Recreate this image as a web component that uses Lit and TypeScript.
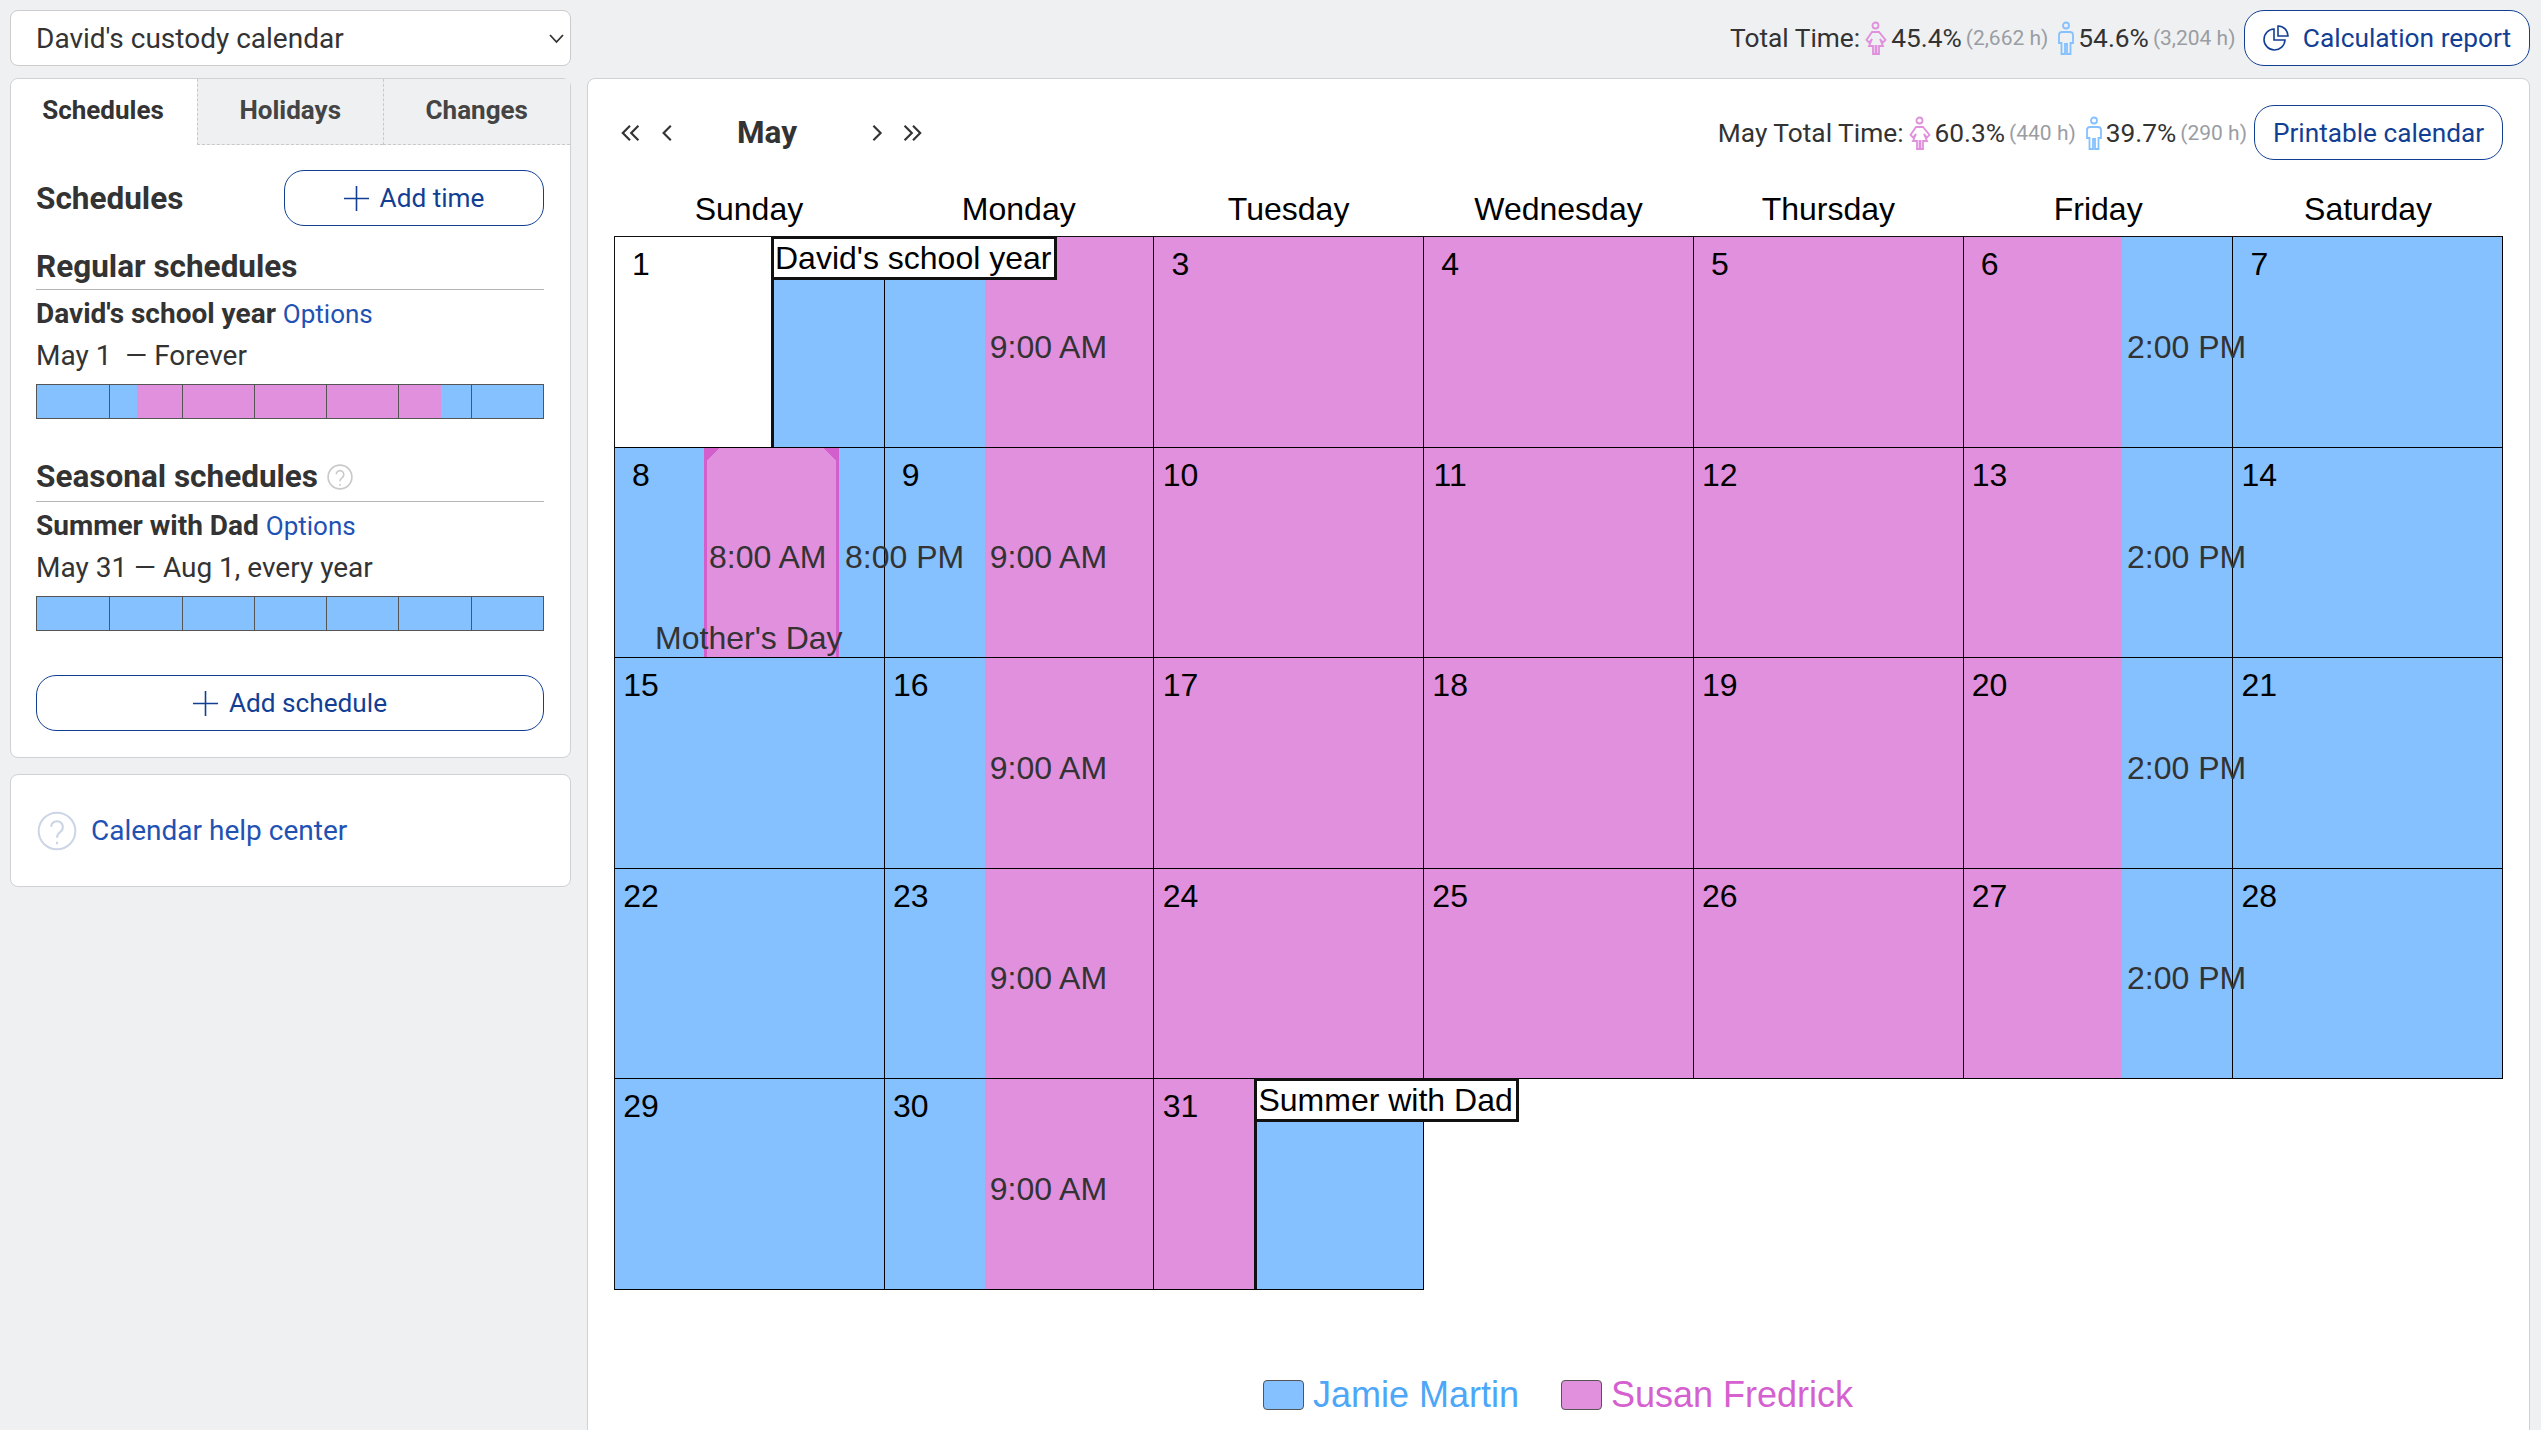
import { LitElement, html, css, svg } from "lit";
import { customElement } from "lit/decorators.js";

const BLUE = "#85c1ff";
const PINK = "#e090dc";

type Note = { text: string; left: number };
type Day = {
  n: number;
  split?: number; // pink/blue change in percent of the cell
  first?: string;
  second?: string;
  notes?: Note[];
  mother?: boolean;
  label?: string;
  labelLeft?: number;
  hideNum?: boolean;
};

const womanIcon = html`<svg class="person woman" viewBox="0 0 23 34" fill="none">
  <circle cx="11.5" cy="4.5" r="3" />
  <path d="M8 11h7l6.5 8-2.500 2.500-3-3.500 3 7h-4v8h-2.500v-8h-1v8H9v-8H5l3-7-3 3.500L2.500 19z" />
</svg>`;

const manIcon = html`<svg class="person man" viewBox="0 0 16 34" fill="none">
  <circle cx="8" cy="4.500" r="3" />
  <path d="M4 11h8a3 3 0 0 1 3 3v8h-2.500v11H9V23H7v10H3.500V22H1v-8a3 3 0 0 1 3-3z" />
</svg>`;

const plusIcon = html`<svg class="plus" viewBox="0 0 25 25" fill="none" stroke="currentColor" stroke-width="1.600">
  <path d="M12.500 0v25M0 12.500h25" />
</svg>`;

const helpPaths = svg`
  <circle cx="12" cy="12" r="11" />
  <path d="M8.500 9.500a3.500 3.500 0 1 1 5.500 3c-1.300.9-2 1.700-2 3.500" />
  <path d="M12 18.500v1.500" />
`;

const chevron = (d: string, cls = "") =>
  html`<svg class="nav-icon ${cls}" viewBox="0 0 20 20" fill="none" stroke="currentColor" stroke-width="1.800">
    <path d=${d} />
  </svg>`;

function buildDays(): Day[] {
  const days: Day[] = [];
  for (let n = 1; n <= 31; n++) {
    const dow = (n - 1) % 7;
    const d: Day = { n };
    if (dow === 0) d.first = d.second = BLUE;
    if (dow === 1) {
      d.first = BLUE;
      d.second = PINK;
      d.split = 37.2;
      d.notes = [{ text: "9:00 AM", left: 105 }];
    }
    if (dow >= 2 && dow <= 4) d.first = d.second = PINK;
    if (dow === 5) {
      d.first = PINK;
      d.second = BLUE;
      d.split = 58.9;
      d.notes = [{ text: "2:00 PM", left: 163.5 }];
    }
    if (dow === 6) d.first = d.second = BLUE;
    days.push(d);
  }
  days[0] = { n: 1, first: "#fff", second: BLUE, split: 58, label: "David's school year", labelLeft: 156 };
  // the school year tag sits where the 2 would be
  days[1].hideNum = true;
  days[7].mother = true;
  days[7].notes = [
    { text: "8:00 AM", left: 94 },
    { text: "8:00 PM", left: 230 },
  ];
  days[30] = { n: 31, first: PINK, second: BLUE, split: 37.2, label: "Summer with Dad", labelLeft: 100 };
  return days;
}

@customElement("app-root")
export class AppRoot extends LitElement {
  static styles = css`
    :host {
      display: block;
      width: 100%;
      height: 100vh;
      overflow: hidden;
      background: #eff0f2;
      color: #333;
      font-family: Roboto, "Liberation Sans", sans-serif;
      font-size: 28px;
    }
    .page {
      display: grid;
      grid-template-columns: 561px 1943px;
      column-gap: 16px;
      padding: 10px 0 0 10px;
    }
    .picker {
      position: relative;
      height: 56px;
    }
    select {
      appearance: none;
      width: 100%;
      height: 100%;
      padding: 0 0 0 25px;
      border: 1px solid #ccc;
      border-radius: 8px;
      background: #fff;
      color: #333;
      font: inherit;
    }
    .picker svg {
      position: absolute;
      right: 7px;
      top: 21px;
      width: 15px;
      height: 15px;
      pointer-events: none;
    }
    .totals {
      display: flex;
      justify-content: flex-end;
      align-items: center;
      height: 56px;
      font-size: 26.300px;
    }
    .totals.month {
      height: 55px;
    }
    .person {
      height: 34px;
      flex: none;
      stroke-width: 1.800;
    }
    .woman {
      width: 23px;
      margin: 0 4px 0 4px;
      stroke: #e090dc;
    }
    .man {
      width: 16px;
      margin: 0 4px 0 10px;
      stroke: #85c1ff;
    }
    .hours {
      margin-left: 4px;
      color: #9a9da3;
      font-size: 21px;
    }
    .btn {
      display: flex;
      align-items: center;
      justify-content: center;
      box-sizing: border-box;
      height: 56px;
      border: 1.500px solid #123f94;
      border-radius: 20px;
      background: #fff;
      color: #123f94;
      font-size: 26.200px;
    }
    .plus {
      width: 25px;
      height: 25px;
      margin-right: 11px;
    }
    .report {
      width: 286px;
      margin-left: 8.500px;
      font-size: 26.300px;
    }
    .report svg {
      width: 26px;
      height: 26px;
      margin-right: 14px;
    }
    .print {
      width: 249px;
      height: 55px;
      margin-left: 7px;
    }
    .side {
      grid-column: 1;
      margin-top: 12px;
    }
    .card {
      box-sizing: border-box;
      border: 1px solid #d0d1d4;
      border-radius: 8px;
      background: #fff;
    }
    .tabs {
      display: grid;
      grid-template-columns: 186px 185.500px 1fr;
      height: 66px;
      font-weight: 700;
      font-size: 26px;
      text-align: center;
      line-height: 62px;
    }
    .tab {
      box-sizing: border-box;
      background: #eff0f2;
      color: #444;
      border-bottom: 1px dashed #c8c9cc;
      border-left: 1px dashed #c8c9cc;
    }
    .tab.active {
      padding-right: 2px;
      background: #fff;
      color: #333;
      border: 0;
      border-radius: 8px 0 0 0;
    }
    .body {
      padding: 25px 26px 26px 25px;
    }
    .head {
      display: flex;
      justify-content: space-between;
      align-items: center;
    }
    .head h2 {
      margin: 0;
      font-size: 31.500px;
      font-weight: 700;
    }
    .head .btn {
      width: 260px;
    }
    h3 {
      display: flex;
      align-items: center;
      height: 32px;
      margin: 25px 0 0;
      padding-bottom: 6px;
      border-bottom: 1px solid #b5b5b8;
      font-size: 31.500px;
      font-weight: 700;
      line-height: 32px;
    }
    h3.seasonal {
      margin-top: 42px;
      padding-bottom: 8px;
    }
    h3 svg {
      width: 26px;
      height: 26px;
      margin-left: 9px;
      fill: none;
      stroke: #c9c9cb;
      stroke-width: 1.500;
    }
    .name {
      height: 32px;
      margin-top: 8px;
      font-weight: 700;
      line-height: 32px;
    }
    .name a {
      font-size: 26px;
    }
    a {
      color: #1f52b3;
      font-weight: 400;
      text-decoration: none;
    }
    .range {
      height: 32px;
      margin-top: 10px;
      line-height: 32px;
    }
    .range span {
      margin-left: 7px;
    }
    .range.tight {
      margin-top: 10px;
    }
    .bar {
      display: grid;
      grid-template-columns: repeat(7, 1fr);
      box-sizing: border-box;
      height: 35px;
      margin-top: 12px;
      border: 1px solid #555;
    }
    .bar div {
      border-left: 1px solid #555;
    }
    .bar div:first-child {
      border-left: 0;
    }
    .wide {
      margin-top: 44px;
    }
    .help {
      display: flex;
      align-items: center;
      height: 113px;
      margin-top: 16px;
      padding-left: 26px;
    }
    .help svg {
      width: 40px;
      height: 40px;
      margin-right: 14px;
      fill: none;
      stroke: #ccd5e6;
      stroke-width: 1.200;
    }
    .main {
      grid-column: 2;
      margin-top: 12px;
      height: 1400px;
      padding: 26px 26px 0;
    }
    .bar-top {
      display: flex;
      justify-content: space-between;
      align-items: center;
      height: 55px;
    }
    .month-nav {
      display: flex;
      align-items: center;
      color: #333;
      padding-left: 4px;
    }
    .nav-icon {
      width: 24px;
      height: 24px;
      flex: none;
    }
    .nav-icon.spaced {
      margin-left: 12px;
    }
    .month-nav b {
      width: 128px;
      margin-left: 59px;
      font-size: 31.500px;
    }
    .names {
      display: grid;
      grid-template-columns: repeat(7, 1fr);
      width: 1889px;
      margin-top: 31px;
      padding-bottom: 9px;
      color: #000;
      font: 32px/36px "Liberation Sans", Arial, sans-serif;
      text-align: center;
    }
    .grid {
      display: grid;
      grid-template-columns: repeat(7, 1fr);
      grid-auto-rows: 210.600px;
      width: 1888px;
      border-top: 1px solid #111;
      border-left: 1px solid #111;
      font: 32px/37px "Liberation Sans", Arial, sans-serif;
      color: #000;
    }
    .cell {
      position: relative;
      box-sizing: border-box;
      border-right: 1px solid #000;
      border-bottom: 1px solid #000;
    }
    .num {
      position: relative;
      width: 52px;
      min-height: 37px;
      padding-top: 9px;
      text-align: center;
    }
    .note {
      position: absolute;
      top: 91.500px;
      z-index: 1;
      color: #333;
      white-space: nowrap;
    }
    .mother {
      position: absolute;
      top: 0;
      bottom: 0;
      left: 89px;
      width: 135px;
      box-sizing: border-box;
      border: solid #d25fcc;
      border-width: 0 3px;
      background:
        linear-gradient(135deg, #d25fcc 9px, transparent 9px) 0 0 / 20px 20px no-repeat,
        linear-gradient(225deg, #d25fcc 9px, transparent 9px) 100% 0 / 20px 20px no-repeat,
        #e090dc;
    }
    .holiday {
      position: absolute;
      left: -1px;
      right: 0;
      top: 172px;
      z-index: 1;
      color: #333;
      text-align: center;
      white-space: nowrap;
    }
    .start {
      position: absolute;
      top: 0;
      bottom: 0;
      z-index: 2;
      border-left: 3px solid #111;
    }
    .tag {
      position: absolute;
      top: -1px;
      left: -3px;
      height: 44px;
      box-sizing: border-box;
      padding: 0 3px 0 1px;
      border: 3px solid #111;
      background: #fff;
      font-size: 32px;
      line-height: 38px;
      white-space: nowrap;
    }
    .blank {
      background: #fff;
    }
    .legend {
      display: flex;
      justify-content: center;
      align-items: center;
      width: 1888px;
      margin-top: 85px;
      font: 36px/40px "Liberation Sans", Arial, sans-serif;
    }
    .swatch {
      box-sizing: border-box;
      width: 41px;
      height: 30px;
      margin-right: 9px;
      border: 1px solid #555;
      border-radius: 4px;
    }
    .jamie {
      margin-right: 42px;
      color: #4da6f7;
    }
    .susan {
      color: #d560d0;
    }
  `;

  private bar(colors: string[]) {
    return html`<div class="bar">
      ${colors.map((c) => html`<div style="background:${c}"></div>`)}
    </div>`;
  }

  private renderDay(d: Day) {
    const first = d.first ?? BLUE;
    const second = d.second ?? first;
    const bg = d.split
      ? `linear-gradient(90deg, ${first} ${d.split}%, ${second} ${d.split}%)`
      : first;
    return html`<div class="cell" style="background:${bg}">
      ${d.mother ? html`<div class="mother"></div>` : null}
      <div class="num">${d.hideNum ? "" : d.n}</div>
      ${(d.notes ?? []).map(
        (note) => html`<div class="note" style="left:${note.left}px">${note.text}</div>`
      )}
      ${d.mother ? html`<div class="holiday">Mother's Day</div>` : null}
      ${d.label
        ? html`<div class="start" style="left:${d.labelLeft}px">
            <div class="tag">${d.label}</div>
          </div>`
        : null}
    </div>`;
  }

  render() {
    const days = buildDays();
    const mondayBar = `linear-gradient(90deg, ${BLUE} 37%, ${PINK} 37%)`;
    const fridayBar = `linear-gradient(90deg, ${PINK} 59%, ${BLUE} 59%)`;
    return html`
      <div class="page">
        <div class="picker">
          <select><option>David's custody calendar</option></select>
          <svg viewBox="0 0 15 15" fill="none" stroke="#333" stroke-width="1.800">
            <path d="M1 4l6.500 7L14 4" />
          </svg>
        </div>
        <div class="totals">
          <span>Total Time:</span>
          ${womanIcon}<span>45.4%</span><span class="hours">(2,662 h)</span>
          ${manIcon}<span>54.6%</span><span class="hours">(3,204 h)</span>
          <div class="btn report">
            <svg viewBox="0 0 26 26" fill="none" stroke="currentColor" stroke-width="1.600">
              <path d="M11 4a10.500 10.500 0 1 0 11 11H11z" />
              <path d="M15 1a10 10 0 0 1 10 10H15z" />
            </svg>
            Calculation report
          </div>
        </div>

        <div class="side">
          <div class="card">
            <div class="tabs">
              <div class="tab active">Schedules</div>
              <div class="tab">Holidays</div>
              <div class="tab">Changes</div>
            </div>
            <div class="body">
              <div class="head">
                <h2>Schedules</h2>
                <div class="btn">${plusIcon}Add time</div>
              </div>
              <h3>Regular schedules</h3>
              <div class="name">David's school year <a>Options</a></div>
              <div class="range">May 1 <span>— Forever</span></div>
              <div class="bar">
                <div style="background:${BLUE}"></div>
                <div style="background:${mondayBar}"></div>
                <div style="background:${PINK}"></div>
                <div style="background:${PINK}"></div>
                <div style="background:${PINK}"></div>
                <div style="background:${fridayBar}"></div>
                <div style="background:${BLUE}"></div>
              </div>
              <h3 class="seasonal">
                Seasonal schedules
                <svg viewBox="0 0 24 24">${helpPaths}</svg>
              </h3>
              <div class="name">Summer with Dad <a>Options</a></div>
              <div class="range tight">May 31 — Aug 1, every year</div>
              ${this.bar(Array(7).fill(BLUE))}
              <div class="btn wide">${plusIcon}Add schedule</div>
            </div>
          </div>
          <div class="card help">
            <svg viewBox="0 0 24 24">${helpPaths}</svg>
            <a>Calendar help center</a>
          </div>
        </div>

        <div class="card main">
          <div class="bar-top">
            <div class="month-nav">
              ${chevron("M10 4l-6 6 6 6M17 4l-6 6 6 6")}
              ${chevron("M14 4l-6 6 6 6", "spaced")}
              <b>May</b>
              ${chevron("M7 4l6 6-6 6")}
              ${chevron("M3 4l6 6-6 6M10 4l6 6-6 6", "spaced")}
            </div>
            <div class="totals month">
              <span>May Total Time:</span>
              ${womanIcon}<span>60.3%</span><span class="hours">(440 h)</span>
              ${manIcon}<span>39.7%</span><span class="hours">(290 h)</span>
              <div class="btn print">Printable calendar</div>
            </div>
          </div>
          <div class="names">
            ${["Sunday", "Monday", "Tuesday", "Wednesday", "Thursday", "Friday", "Saturday"].map(
              (n) => html`<div>${n}</div>`
            )}
          </div>
          <div class="grid">
            ${days.map((d) => this.renderDay(d))}
            ${[0, 1, 2, 3].map(() => html`<div class="blank"></div>`)}
          </div>
          <div class="legend">
            <div class="swatch" style="background:${BLUE}"></div>
            <span class="jamie">Jamie Martin</span>
            <div class="swatch" style="background:${PINK}"></div>
            <span class="susan">Susan Fredrick</span>
          </div>
        </div>
      </div>
    `;
  }
}
